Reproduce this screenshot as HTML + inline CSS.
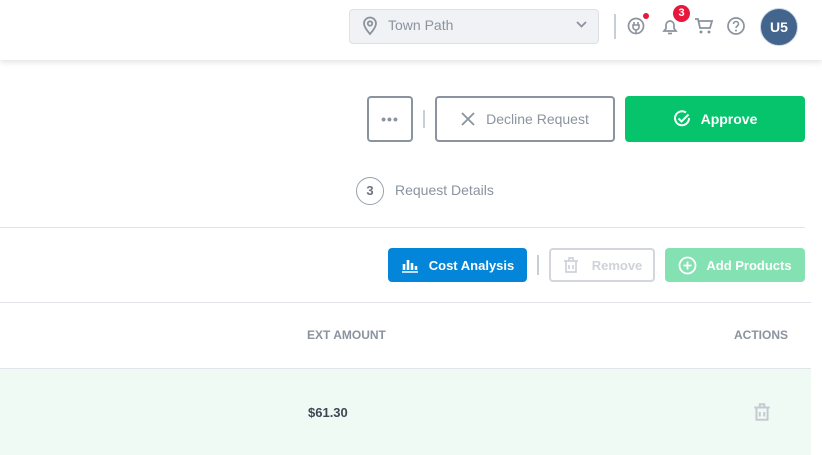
<!DOCTYPE html>
<html><head><style>
*{box-sizing:border-box;margin:0;padding:0}
body{width:822px;height:455px;background:#fff;font-family:"Liberation Sans",sans-serif;position:relative;overflow:hidden}
.abs{position:absolute}
.hdr{left:0;top:0;width:822px;height:60px;background:#fff;box-shadow:0 2px 6px rgba(0,0,0,.12)}
.btn{position:absolute;border-radius:4px;display:flex;align-items:center;justify-content:center;font-weight:bold;font-size:13px}
</style></head><body>
<div class="abs hdr"></div>
<div class="abs" style="left:349px;top:9px;width:250px;height:35px;background:#f0f2f5;border:1px solid #dde1e7;border-radius:4px"></div>
<svg class="abs" style="left:361px;top:16px" width="18" height="20" viewBox="0 0 18 20"><path d="M9 18c-4-4.5-6-7.5-6-10.5a6 6 0 0112 0c0 3-2 6-6 10.5z" fill="none" stroke="#8b939e" stroke-width="1.8"/><circle cx="9" cy="7.5" r="2.2" fill="none" stroke="#8b939e" stroke-width="1.8"/></svg>
<div class="abs" style="left:388px;top:17px;font-size:14px;color:#8b939e">Town Path</div>
<svg class="abs" style="left:576px;top:21px" width="11" height="7"><path d="M1 1l4.5 4.5L10 1" fill="none" stroke="#8b939e" stroke-width="1.8"/></svg>
<div class="abs" style="left:614px;top:14px;width:2px;height:25px;background:#c8ced6"></div>
<svg class="abs" style="left:627px;top:16px" width="20" height="20" viewBox="0 0 20 20"><circle cx="9" cy="10" r="7.5" fill="none" stroke="#8b939e" stroke-width="1.7"/><path d="M7 6v3M11 6v3M6 9h6v2a3 3 0 01-6 0zM9 14v3" fill="none" stroke="#8b939e" stroke-width="1.6"/></svg>
<div class="abs" style="left:643px;top:13px;width:6px;height:6px;border-radius:50%;background:#e8173c"></div>
<svg class="abs" style="left:660px;top:16px" width="20" height="20" viewBox="0 0 20 20"><path d="M4 15h12l-2-2.5V9a4 4 0 00-8 0v3.5z" fill="none" stroke="#8b939e" stroke-width="1.7"/><path d="M8 17.5h4" stroke="#8b939e" stroke-width="1.7"/></svg>
<div class="abs" style="left:673px;top:5px;width:17px;height:17px;border-radius:50%;background:#e8173c;color:#fff;font-size:11px;font-weight:bold;text-align:center;line-height:17px">3</div>
<svg class="abs" style="left:694px;top:17px" width="20" height="18" viewBox="0 0 20 18"><path d="M1 2h3l2 9h10l2-7H5" fill="none" stroke="#8b939e" stroke-width="1.8"/><circle cx="7" cy="15" r="1.5" fill="#8b939e"/><circle cx="15" cy="15" r="1.5" fill="#8b939e"/></svg>
<svg class="abs" style="left:726px;top:16px" width="20" height="20" viewBox="0 0 20 20"><circle cx="10" cy="10" r="8" fill="none" stroke="#8b939e" stroke-width="1.7"/><path d="M7.5 8a2.5 2.5 0 115 0c0 2-2.5 2-2.5 4" fill="none" stroke="#8b939e" stroke-width="1.6"/><circle cx="10" cy="14.5" r="1" fill="#8b939e"/></svg>
<div class="abs" style="left:760px;top:8px;width:38px;height:38px;border-radius:50%;background:#43658d;border:1px solid #c8d3e0;color:#fff;font-weight:bold;font-size:14px;text-align:center;line-height:36px">U5</div>

<div class="btn" style="left:367px;top:96px;width:46px;height:46px;border:2px solid #8b939e;color:#8b939e;font-size:14px;letter-spacing:1px">•••</div>
<div class="abs" style="left:423px;top:110px;width:2px;height:18px;background:#c8ced6"></div>
<div class="btn" style="left:435px;top:96px;width:180px;height:46px;border:2px solid #8b939e;color:#8b939e;font-weight:normal;font-size:14px"><svg width="14" height="14" style="margin-right:11px"><path d="M1 1l12 12M13 1L1 13" stroke="#8b939e" stroke-width="1.8"/></svg>Decline Request</div>
<div class="btn" style="left:625px;top:96px;width:180px;height:46px;background:#05c46b;color:#fff;font-size:14px"><svg width="18" height="18" viewBox="0 0 18 18" style="margin-right:10px"><path d="M16 8a7 7 0 11-3-5.5" fill="none" stroke="#fff" stroke-width="2"/><path d="M5.5 8.5l3 3 7-7" fill="none" stroke="#fff" stroke-width="2"/></svg>Approve</div>

<div class="abs" style="left:356px;top:177px;width:28px;height:28px;border-radius:50%;border:1px solid #9aa1ab;color:#6b7380;font-size:13px;font-weight:bold;text-align:center;line-height:26px">3</div>
<div class="abs" style="left:395px;top:182px;font-size:14px;color:#8b939e">Request Details</div>

<div class="abs" style="left:0;top:227px;width:805px;height:1px;background:#e1e5ea"></div>

<div class="btn" style="left:388px;top:248px;width:139px;height:34px;background:#0386d9;color:#fff"><svg width="18" height="16" viewBox="0 0 18 16" style="margin-right:10px"><path d="M3 7v6M7 3v10M11 6v7M15 9v4" stroke="#fff" stroke-width="2.6"/><path d="M1 15h16" stroke="#fff" stroke-width="1.5"/></svg>Cost Analysis</div>
<div class="abs" style="left:537px;top:255px;width:2px;height:20px;background:#c8ced6"></div>
<div class="btn" style="left:549px;top:248px;width:106px;height:34px;border:2px solid #d3d7dd;color:#cfd3d9"><svg width="18" height="18" viewBox="0 0 18 18" style="margin-right:12px"><path d="M2 5h14M7 5V2h4v3M4 5v11h10V5M7 9v4M11 9v4" fill="none" stroke="#cfd3d9" stroke-width="1.7"/></svg>Remove</div>
<div class="btn" style="left:665px;top:248px;width:140px;height:34px;background:#84e1b2;color:#fff"><svg width="19" height="19" viewBox="0 0 19 19" style="margin-right:9px"><circle cx="9.5" cy="9.5" r="8" fill="none" stroke="#fff" stroke-width="1.8"/><path d="M9.5 5.5v8M5.5 9.5h8" stroke="#fff" stroke-width="1.8"/></svg>Add Products</div>

<div class="abs" style="left:0;top:302px;width:811px;height:1px;background:#e1e5ea"></div>
<div class="abs" style="left:307px;top:328px;font-size:12px;font-weight:bold;color:#8b939e">EXT AMOUNT</div>
<div class="abs" style="left:734px;top:328px;font-size:12px;font-weight:bold;color:#8b939e">ACTIONS</div>
<div class="abs" style="left:0;top:368px;width:811px;height:1px;background:#e1e5ea"></div>
<div class="abs" style="left:0;top:369px;width:811px;height:86px;background:#f0faf5"></div>
<div class="abs" style="left:308px;top:405px;font-size:13px;font-weight:bold;color:#3d4753">$61.30</div>
<svg class="abs" style="left:752px;top:402px" width="20" height="20" viewBox="0 0 18 18"><path d="M2 5h14M7 5V2h4v3M4 5v11h10V5M7 9v4M11 9v4" fill="none" stroke="#c5cad1" stroke-width="1.8"/></svg>
</body></html>
